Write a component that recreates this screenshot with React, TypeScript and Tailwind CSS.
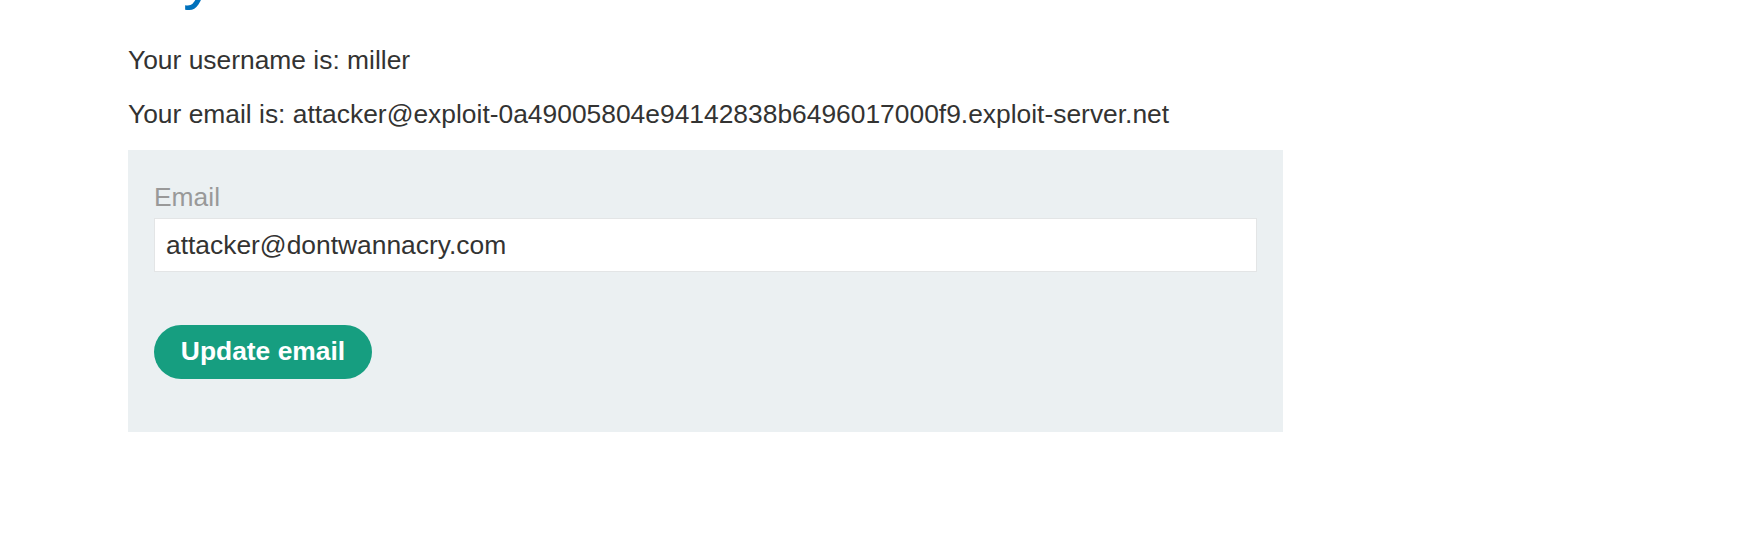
import React, { useState } from "react";

const App: React.FC = () => {
  const [email, setEmail] = useState<string>("attacker@dontwannacry.com");

  return (
    <div
      className="min-h-[558px] w-full overflow-hidden bg-white pl-[128px] text-[#333332]"
      style={{ fontFamily: '"Liberation Sans", Arial, sans-serif' }}
    >
      <h1 className="-mt-[60px] text-[66px] leading-[66px] font-normal text-[#0071bc]">
        My Account
      </h1>
      <div className="mt-[39px] flex flex-col gap-[24px]">
        <p className="text-[26.4px] leading-[30px]">Your username is: miller</p>
        <p className="text-[26.4px] leading-[30px]">
          Your email is: attacker@exploit-0a49005804e94142838b6496017000f9.exploit-server.net
        </p>
      </div>
      <form
        className="mt-[21px] flex w-[1155px] flex-col bg-[#ebf0f2] px-[26px] pt-[32px] pb-[53px]"
        onSubmit={(e) => e.preventDefault()}
      >
        <label className="text-[26.4px] leading-[30px] text-[#999999]">Email</label>
        <input
          type="email"
          value={email}
          onChange={(e) => setEmail(e.target.value)}
          className="mt-[6px] h-[54px] w-full border border-[#e3e5e6] bg-white pl-[11px] text-[26.4px] text-[#333332] outline-none"
        />
        <button
          type="submit"
          className="mt-[53px] h-[54px] w-[218px] rounded-full bg-[#169e80] text-[26.4px] font-bold text-white"
        >
          Update email
        </button>
      </form>
    </div>
  );
};

export default App;
